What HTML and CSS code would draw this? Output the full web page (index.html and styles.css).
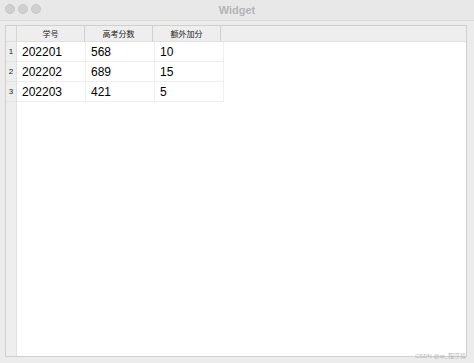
FILE: index.html
```html
<!DOCTYPE html>
<html lang="zh-CN">
<head>
  <meta charset="UTF-8">
  <meta name="viewport" content="width=device-width, initial-scale=1.0">
  <title>Widget</title>
  <link rel="stylesheet" href="styles.css">
</head>
<body>
  <div class="window">
    <div class="titlebar">
      <div class="lights">
        <span class="light"></span>
        <span class="light"></span>
        <span class="light"></span>
      </div>
      <div class="title">Widget</div>
    </div>
    <div class="content">
      <div class="table-frame">
        <div class="table-head">
          <div class="corner"></div>
          <div class="hcell">学号</div>
          <div class="hcell">高考分数</div>
          <div class="hcell">额外加分</div>
          <div class="hfill"></div>
        </div>
        <div class="table-body">
          <div class="vheader">
            <div class="vcell">1</div>
            <div class="vcell">2</div>
            <div class="vcell">3</div>
          </div>
          <div class="rows">
            <div class="row">
              <div class="cell">202201</div>
              <div class="cell">568</div>
              <div class="cell">10</div>
            </div>
            <div class="row">
              <div class="cell">202202</div>
              <div class="cell">689</div>
              <div class="cell">15</div>
            </div>
            <div class="row">
              <div class="cell">202203</div>
              <div class="cell">421</div>
              <div class="cell">5</div>
            </div>
          </div>
        </div>
      </div>
      <div class="watermark">CSDN @qt_程序猿</div>
    </div>
  </div>
</body>
</html>
```

FILE: styles.css
```css
html, body {
  margin: 0;
  padding: 0;
}

body {
  width: 474px;
  height: 363px;
  overflow: hidden;
  background: #ececec;
  font-family: "Liberation Sans", Arial, "Noto Sans CJK SC", sans-serif;
}

.window {
  display: flex;
  flex-direction: column;
  height: 363px;
  background: #ececec;
}

.titlebar {
  position: relative;
  height: 20px;
  display: flex;
  align-items: center;
  justify-content: center;
  background: #e8e8e8;
  border-bottom: 1px solid #dcdcdc;
}

.lights {
  position: absolute;
  left: 5px;
  top: 4px;
  display: flex;
  gap: 3px;
}

.light {
  width: 10px;
  height: 10px;
  border-radius: 50%;
  background: #d0d0d0;
  border: 1px solid #c6c6c6;
  box-sizing: border-box;
}

.title {
  font-size: 11px;
  font-weight: bold;
  color: #b4b4b4;
}

.content {
  position: relative;
  flex: 1;
  padding: 4px 7px 6px 5px;
  display: flex;
}

.table-frame {
  flex: 1;
  display: flex;
  flex-direction: column;
  border: 1px solid #cfcfcf;
  background: #fff;
}

.table-head {
  display: flex;
  height: 15px;
  background: #eeeeee;
  border-bottom: 1px solid #e0e0e0;
}

.corner {
  width: 10px;
  border-right: 1px solid #d6d6d6;
}

.hcell {
  width: 67px;
  border-right: 1px solid #d0d0d0;
  font-size: 8px;
  color: #222;
  display: flex;
  align-items: center;
  justify-content: center;
}

.hfill {
  flex: 1;
}

.table-body {
  flex: 1;
  display: flex;
}

.vheader {
  width: 10px;
  background: #eeeeee;
  border-right: 1px solid #e0e0e0;
}

.vcell {
  height: 19px;
  border-bottom: 1px solid #e4e4e4;
  font-size: 8px;
  color: #222;
  display: flex;
  align-items: center;
  justify-content: center;
}

.row {
  display: flex;
}

.cell {
  width: 63px;
  height: 19px;
  padding-left: 5px;
  border-right: 1px solid #efefef;
  border-bottom: 1px solid #efefef;
  font-size: 12px;
  color: #000;
  display: flex;
  align-items: center;
}

.watermark {
  position: absolute;
  right: 8px;
  bottom: 3px;
  font-size: 6px;
  color: #b8b8b8;
}
```
